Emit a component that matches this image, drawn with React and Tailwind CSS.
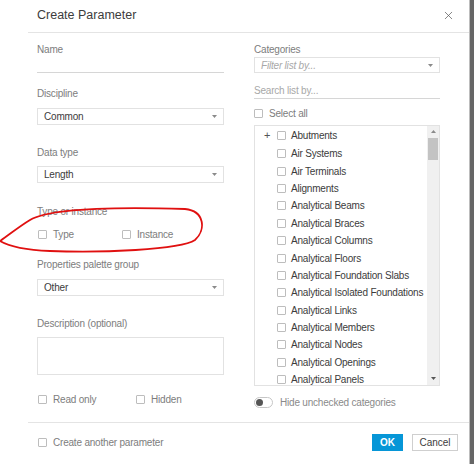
import { X } from "lucide-react";

const CATEGORIES = [
  "Abutments",
  "Air Systems",
  "Air Terminals",
  "Alignments",
  "Analytical Beams",
  "Analytical Braces",
  "Analytical Columns",
  "Analytical Floors",
  "Analytical Foundation Slabs",
  "Analytical Isolated Foundations",
  "Analytical Links",
  "Analytical Members",
  "Analytical Nodes",
  "Analytical Openings",
  "Analytical Panels",
];

function Box() {
  return <span className="w-[9px] h-[9px] border border-[#bdbdbd] rounded-[1px] bg-white shrink-0" />;
}

function Caret() {
  return (
    <svg width="5" height="3" viewBox="0 0 5 3" className="shrink-0">
      <path d="M0 0 L5 0 L2.5 3 Z" fill="#8a8a8a" />
    </svg>
  );
}

function Label({ children, className = "" }) {
  return <div className={`h-[14px] leading-[14px] text-[#7d7d7d] ${className}`}>{children}</div>;
}

function Select({ value, className = "" }) {
  return (
    <div className={`h-[17px] border border-[#e2e2e2] flex items-center justify-between pl-[6px] pr-[6px] text-[#3c3c3c] ${className}`}>
      <span>{value}</span>
      <Caret />
    </div>
  );
}

export default function App() {
  return (
    <div className="w-[474px] h-[464px] bg-white flex relative overflow-hidden font-['Liberation_Sans',sans-serif] text-[10px] tracking-[-0.2px]">
      <div className="w-[28px] shrink-0" />

      <div className="w-[441px] shrink-0 flex flex-col">
        {/* Header */}
        <div className="h-[33px] shrink-0 border-b border-[#e4e4e4] flex items-start justify-between pl-[9px] pr-[14px] pt-[8px]">
          <span className="text-[12.5px] leading-[14px] text-[#3c3c3c] tracking-normal">Create Parameter</span>
          <X size={13} strokeWidth={1.3} className="text-[#555] mt-[1px]" />
        </div>

        {/* Body */}
        <div className="h-[389px] shrink-0 flex pl-[9px] gap-[30px] pt-[10px]">
          {/* Left column */}
          <div className="w-[187px] flex flex-col">
            <Label>Name</Label>
            <div className="h-[16px] border-b border-[#d6d6d6]" />

            <Label className="mt-[14px]">Discipline</Label>
            <Select value="Common" className="mt-[7px]" />

            <Label className="mt-[21px]">Data type</Label>
            <Select value="Length" className="mt-[6px]" />

            <Label className="mt-[22px]">Type or instance</Label>
            <div className="mt-[8px] h-[14px] flex items-center text-[#7d7d7d]">
              <div className="w-[85px] flex items-center gap-[6px] pl-[1px]">
                <Box />
                <span>Type</span>
              </div>
              <div className="flex items-center gap-[6px]">
                <Box />
                <span>Instance</span>
              </div>
            </div>

            <Label className="mt-[17px]">Properties palette group</Label>
            <Select value="Other" className="mt-[7px]" />

            <Label className="mt-[21px]">Description (optional)</Label>
            <div className="mt-[6px] h-[38px] border border-[#e2e2e2]" />

            <div className="mt-[17px] h-[14px] flex items-center text-[#7d7d7d]">
              <div className="w-[99px] flex items-center gap-[6px] pl-[1px]">
                <Box />
                <span>Read only</span>
              </div>
              <div className="flex items-center gap-[6px]">
                <Box />
                <span>Hidden</span>
              </div>
            </div>
          </div>

          {/* Right column */}
          <div className="w-[186px] flex flex-col">
            <Label>Categories</Label>
            <div className="h-[16px] border border-[#e2e2e2] flex items-center justify-between pl-[6px] pr-[6px]">
              <span className="italic text-[#a8a8a8]">Filter list by...</span>
              <Caret />
            </div>

            <div className="mt-[9px] h-[17px] border-b border-[#d6d6d6] flex items-center text-[#a8a8a8]">
              Search list by...
            </div>

            <div className="mt-[7px] h-[14px] flex items-center gap-[6px] text-[#7d7d7d]">
              <Box />
              <span>Select all</span>
            </div>

            <div className="mt-[5px] h-[261px] border border-[#e2e2e2] flex text-[#3c3c3c] overflow-hidden">
              <div className="flex-1 flex flex-col">
                {CATEGORIES.map((c, i) => (
                  <div key={c} className={`${i === 0 ? "h-[19px]" : "h-[17.4px]"} shrink-0 flex items-center`}>
                    <span className="w-[22px] text-center text-[11px] text-[#555] pl-[2px]">{i === 0 ? "+" : ""}</span>
                    <Box />
                    <span className="ml-[5px] whitespace-nowrap">{c}</span>
                  </div>
                ))}
              </div>
              <div className="w-[12px] bg-[#f0f0f0] flex flex-col items-center">
                <svg width="5" height="3" viewBox="0 0 5 3" className="mt-[4px]">
                  <path d="M0 3 L5 3 L2.5 0 Z" fill="#8a8a8a" />
                </svg>
                <div className="mt-[5px] w-[10px] h-[22px] bg-[#c3c3c3]" />
                <div className="flex-1" />
                <svg width="5" height="3" viewBox="0 0 5 3" className="mb-[5px]">
                  <path d="M0 0 L5 0 L2.5 3 Z" fill="#555" />
                </svg>
              </div>
            </div>

            <div className="mt-[9px] h-[14px] flex items-center gap-[7px] text-[#8a8a8a]">
              <span className="w-[19px] h-[11px] rounded-full border border-[#c6c6c6] flex items-center pl-[1px]">
                <span className="w-[7px] h-[7px] rounded-full bg-[#555]" />
              </span>
              <span>Hide unchecked categories</span>
            </div>
          </div>
        </div>

        {/* Footer */}
        <div className="flex-1 border-t border-[#e4e4e4] flex items-start justify-between pl-[10px] pr-[11px] pt-[11px]">
          <div className="h-[17px] flex items-center gap-[6px] text-[#7d7d7d]">
            <Box />
            <span>Create another parameter</span>
          </div>
          <div className="flex gap-[9px]">
            <button className="w-[31px] h-[17px] bg-[#0696d7] text-white font-bold text-[10px] tracking-normal">OK</button>
            <button className="w-[46px] h-[17px] border border-[#cfcfcf] text-[#3c3c3c] text-[10px] tracking-normal">Cancel</button>
          </div>
        </div>
      </div>

      <div className="w-[5px] shrink-0 bg-[#666] border-l border-[#bdbdbd]" />

      {/* red hand-drawn annotation */}
      <svg className="absolute left-0 top-0 pointer-events-none" width="474" height="464" viewBox="0 0 474 464">
        <path
          d="M0 241 C10 234 20 226 30 220 C50 208 120 207 185 209 C205 211 206 230 195 240 C180 250 100 253 50 251 C25 250 10 247 0 241"
          fill="none"
          stroke="#e01010"
          strokeWidth="1.8"
          strokeLinecap="round"
        />
      </svg>
    </div>
  );
}
